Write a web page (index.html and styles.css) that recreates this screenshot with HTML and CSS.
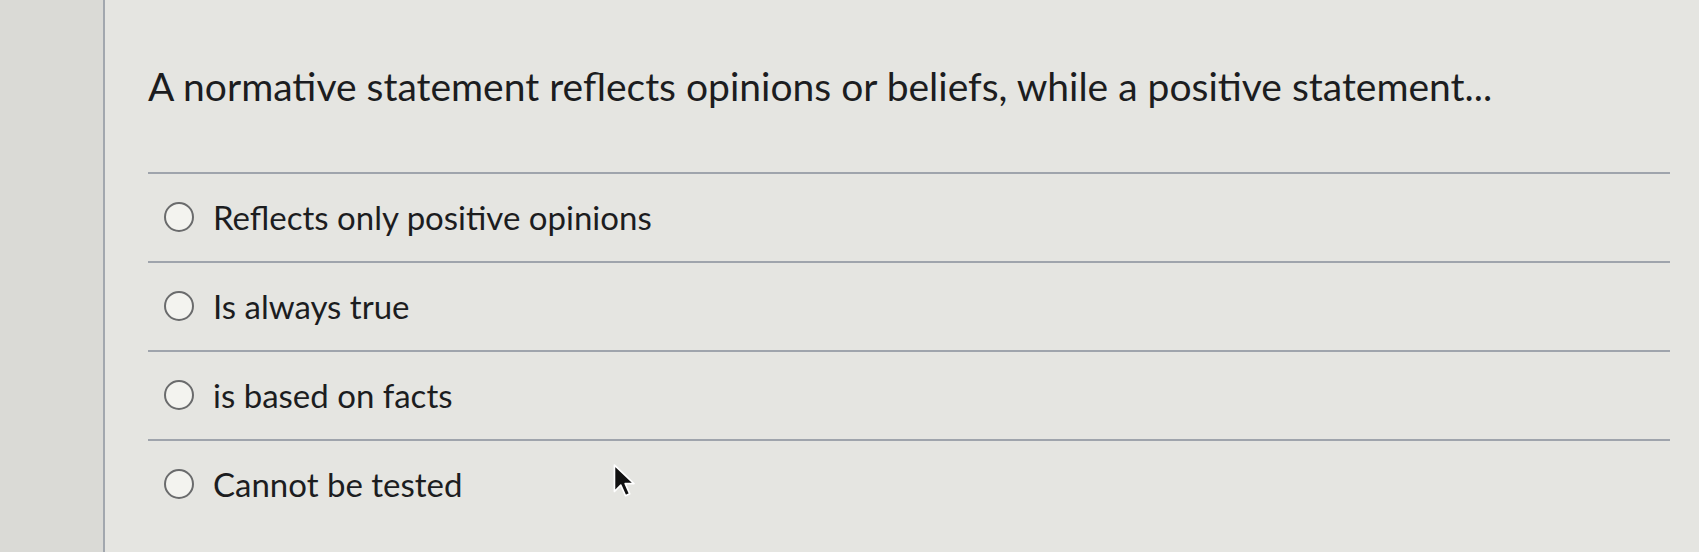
FILE: index.html
```html
<!DOCTYPE html>
<html lang="en">
<head>
<meta charset="utf-8">
<title>Quiz question</title>
<link rel="stylesheet" href="styles.css">
</head>
<body>
<div class="page">
  <aside class="rail"></aside>
  <main class="main">
    <div class="question">A normative statement reflects opinions or beliefs, while a positive statement...</div>
    <ul class="answers">
      <li class="answer"><span class="radio"></span><span class="label">Reflects only positive opinions</span></li>
      <li class="answer"><span class="radio"></span><span class="label">Is always true</span></li>
      <li class="answer"><span class="radio"></span><span class="label">is based on facts</span></li>
      <li class="answer"><span class="radio"></span><span class="label">Cannot be tested</span></li>
    </ul>
    <svg class="cursor" width="26" height="38" viewBox="0 0 24 36" aria-hidden="true">
      <path d="M2 2 L2 27 L8 21 L12.5 31 L16.5 29.2 L12.2 19.5 L20.5 19.5 Z" fill="#111" stroke="#fff" stroke-width="1.6" stroke-linejoin="round"/>
    </svg>
  </main>
</div>
</body>
</html>
```

FILE: styles.css
```css
html, body {
  margin: 0;
  padding: 0;
  background: #e4e4e0;
}

.page {
  display: flex;
  width: 1699px;
  height: 552px;
  overflow: hidden;
  font-family: Lato, "Noto Sans", sans-serif;
  color: #1c1d1f;
}

.rail {
  width: 103px;
  flex: 0 0 103px;
  background: #dadad6;
  border-right: 2px solid #a2a7ae;
}

.main {
  position: relative;
  flex: 1;
  padding: 63px 29px 0 43px;
  background: #e5e5e1;
}

.question {
  font-size: 39px;
  line-height: 1.2;
  margin-bottom: 62px;
}

.answers {
  list-style: none;
  margin: 0;
  padding: 0;
}

.answer {
  display: flex;
  align-items: center;
  gap: 19px;
  height: 87px;
  padding: 0 0 0 16px;
  border-top: 2px solid #9fa4ac;
}

.radio {
  flex: 0 0 auto;
  width: 26px;
  height: 26px;
  border: 2px solid #6a6b6c;
  border-radius: 50%;
  background: #f3f3ef;
}

.label {
  font-size: 33px;
  line-height: 1.2;
}

.cursor {
  position: absolute;
  left: 507px;
  top: 463px;
}
```
